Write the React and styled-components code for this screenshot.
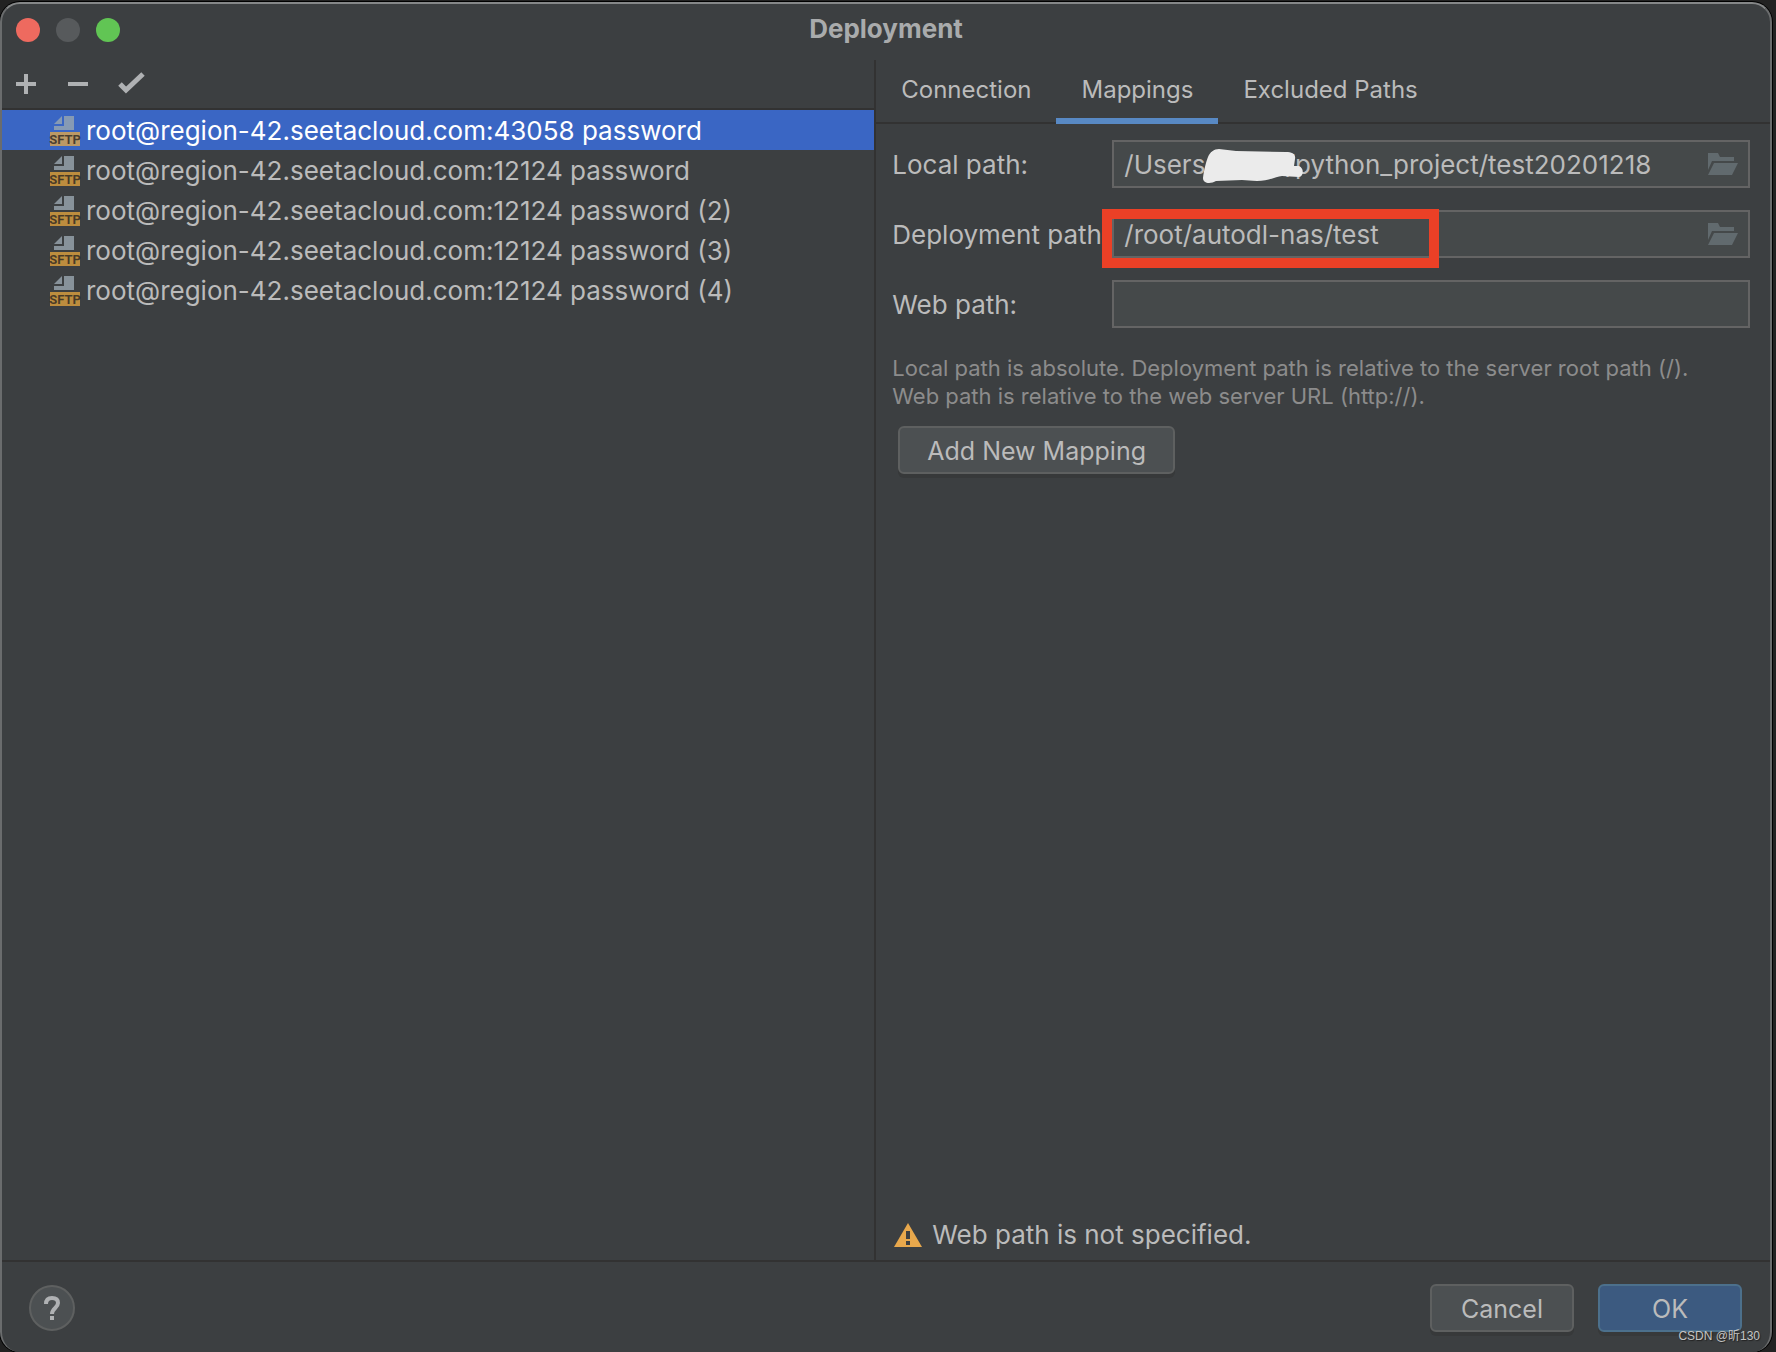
import React, { useState } from "react";
import styled, { createGlobalStyle, css } from "styled-components";

const servers = [
  "root@region-42.seetacloud.com:43058 password",
  "root@region-42.seetacloud.com:12124 password",
  "root@region-42.seetacloud.com:12124 password (2)",
  "root@region-42.seetacloud.com:12124 password (3)",
  "root@region-42.seetacloud.com:12124 password (4)",
];

const tabs = ["Connection", "Mappings", "Excluded Paths"];

const SftpIcon = () => (
  <svg width="30" height="30" viewBox="0 0 30 30" aria-hidden="true">
    <path d="M12 0v8H4z M14 0h10v14H4v-4h10z" fill="#9AA7B0" fillOpacity="0.8" />
    <path d="M0 16h30v14H0z" fill="#F4AF3D" fillOpacity="0.7" />
    <text
      x="15"
      y="28"
      textAnchor="middle"
      fontFamily="Roboto, sans-serif"
      fontSize="13"
      fontWeight="700"
      fill="#231F20"
      fillOpacity="0.75"
    >
      SFTP
    </text>
  </svg>
);

const FolderIcon = () => (
  <svg width="30" height="22" viewBox="0 0 30 22" aria-hidden="true">
    <path d="M0 0h10l2 4h14v4H4L0 17z" fill="#616a6e" />
    <path d="M6 10h24l-6 12H0z" fill="#616a6e" />
  </svg>
);

const WarningIcon = () => (
  <svg width="28" height="24" viewBox="0 0 28 24" aria-hidden="true">
    <path d="M14 0l14 24H0z" fill="#E8A84C" />
    <path d="M12 8h4v8h-4z M12 18h4v4h-4z" fill="#3c3f41" />
  </svg>
);

const Scribble = () => (
  <svg width="102" height="34" viewBox="0 0 102 34" aria-hidden="true">
    <path
      d="M1 29C2 21 4 13 6 8C8 3 12 0 17 0L34 2L84 3C90 3 94 5 93 10L92 17L97 17C102 19 102 27 97 28L80 27C73 28 66 32 55 32C49 32 45 31 40 31L14 32C9 35 1 35 1 29z"
      fill="#ebebeb"
    />
  </svg>
);

export default function App() {
  const [selected, setSelected] = useState(0);
  const [tab, setTab] = useState("Mappings");
  const [localPath, setLocalPath] = useState("/Users/xxxxx/python_project/test20201218");
  const [deployPath, setDeployPath] = useState("/root/autodl-nas/test");
  const [webPath, setWebPath] = useState("");

  return (
    <React.Fragment>
      <GlobalStyle />
      <Window>
        <TitleBar>
          <Lights>
            <Light $color="#ee6a5f" aria-label="Close" />
            <Light $color="#575a5c" aria-label="Minimize" />
            <Light $color="#61c554" aria-label="Zoom" />
          </Lights>
          <Title>Deployment</Title>
        </TitleBar>
        <Body>
          <Sidebar>
            <Toolbar>
              <ToolButton aria-label="Add">
                <svg width="20" height="20" viewBox="0 0 20 20">
                  <path d="M8 0h4v8h8v4h-8v8H8v-8H0V8h8z" fill="#afb1b3" />
                </svg>
              </ToolButton>
              <ToolButton aria-label="Remove">
                <svg width="20" height="20" viewBox="0 0 20 20">
                  <path d="M0 8h20v4H0z" fill="#afb1b3" />
                </svg>
              </ToolButton>
              <ToolButton aria-label="Use as default">
                <svg width="26" height="22" viewBox="0 0 26 22">
                  <path d="M0 11l6 6L23 1" fill="none" stroke="#afb1b3" strokeWidth="5" />
                </svg>
              </ToolButton>
            </Toolbar>
            <ServerList>
              {servers.map((name, index) => (
                <li key={name}>
                  <Server $active={index === selected} onClick={() => setSelected(index)}>
                    <SftpIcon />
                    <span>{name}</span>
                  </Server>
                </li>
              ))}
            </ServerList>
          </Sidebar>
          <Content>
            <Tabs>
              {tabs.map((name) => (
                <Tab key={name} $active={name === tab} onClick={() => setTab(name)}>
                  {name}
                </Tab>
              ))}
            </Tabs>
            <Panel>
              <Fields>
                <Label htmlFor="local">Local path:</Label>
                <Field>
                  <Input id="local" value={localPath} onChange={({ target }) => setLocalPath(target.value)} />
                  <Browse aria-label="Browse local path"><FolderIcon /></Browse>
                  <Redaction><Scribble /></Redaction>
                </Field>
                <Label htmlFor="deploy">Deployment path:</Label>
                <Field>
                  <Input id="deploy" value={deployPath} onChange={({ target }) => setDeployPath(target.value)} />
                  <Browse aria-label="Browse deployment path"><FolderIcon /></Browse>
                  <Highlight />
                </Field>
                <Label htmlFor="web">Web path:</Label>
                <Field>
                  <Input id="web" value={webPath} onChange={({ target }) => setWebPath(target.value)} />
                </Field>
              </Fields>
              <Hint>
                Local path is absolute. Deployment path is relative to the server root path (/).
                <br />
                Web path is relative to the web server URL (http://).
              </Hint>
              <AddButton>Add New Mapping</AddButton>
              <Warning>
                <WarningIcon />
                <span>Web path is not specified.</span>
              </Warning>
            </Panel>
          </Content>
        </Body>
        <Footer>
          <HelpButton aria-label="Help">
            <svg width="16" height="24" viewBox="0 0 16 24">
              <path d="M2 8C2 4 4 2 8 2s6 2 6 5c0 5-6 5-6 11" fill="none" stroke="#afb1b3" strokeWidth="4" />
              <path d="M6 20h4v4H6z" fill="#afb1b3" />
            </svg>
          </HelpButton>
          <Button>Cancel</Button>
          <Button $primary>OK</Button>
        </Footer>
        <Watermark>CSDN @昕130</Watermark>
      </Window>
    </React.Fragment>
  );
}

const GlobalStyle = createGlobalStyle`
  * {
    box-sizing: border-box;
  }

  body {
    margin: 0;
    background: #222;
    color: #bbb;
    font: 26px/32px Inter, "Noto Sans CJK SC", sans-serif;
  }

  button, input {
    margin: 0;
    padding: 0;
    border: 0;
    background: none;
    color: inherit;
    font: inherit;
  }

  svg {
    display: block;
    flex: none;
    overflow: visible;
  }
`;

const Window = styled.div`
  position: relative;
  display: flex;
  flex-direction: column;
  min-height: calc(100vh - 2px);
  margin: 2px 4px 0 0;
  border: 2px solid #6a6c6d;
  border-top-color: #858788;
  border-bottom: 0;
  border-radius: 20px;
  background: #3c3f41;
  box-shadow: 0 0 0 1px #000;
`;

const TitleBar = styled.header`
  display: flex;
  align-items: center;
  height: 56px;
  padding: 0 14px 4px;

  &::after {
    content: "";
    flex: 1;
  }
`;

const Lights = styled.div`
  display: flex;
  flex: 1;
  gap: 16px;
`;

const Light = styled.button`
  width: 24px;
  height: 24px;
  border-radius: 50%;
  background: ${({ $color }) => $color};
`;

const Title = styled.h1`
  margin: 0;
  padding-bottom: 2px;
  color: #a9abac;
  font-size: 26px;
  font-weight: 700;
`;

const Body = styled.div`
  display: flex;
  flex: 1;
`;

const Sidebar = styled.aside`
  flex: none;
  width: 49.45%;
  border-right: 2px solid #323232;
`;

const Toolbar = styled.div`
  display: flex;
  align-items: center;
  gap: 32px;
  height: 50px;
  padding: 0 14px;
  border-bottom: 2px solid #323232;
`;

const ToolButton = styled.button`
  display: flex;
`;

const ServerList = styled.ul`
  margin: 0;
  padding: 0;
  list-style: none;
`;

const Server = styled.button`
  display: flex;
  align-items: center;
  gap: 6px;
  width: 100%;
  height: 40px;
  padding: 2px 0 0 48px;
  text-align: left;
  white-space: nowrap;

  ${({ $active }) => $active && css`
    background: #3a66c4;
    color: #fff;
  `}
`;

const Content = styled.main`
  display: flex;
  flex: 1;
  flex-direction: column;
  min-width: 0;
`;

const Tabs = styled.nav`
  display: flex;
  height: 64px;
  border-bottom: 2px solid #323232;
`;

const Tab = styled.button`
  height: 64px;
  padding: 2px 25px 0;
  border-bottom: 6px solid ${({ $active }) => ($active ? "#5889c4" : "transparent")};
  font-size: 24px;
`;

const Panel = styled.div`
  display: flex;
  flex: 1;
  flex-direction: column;
  align-items: flex-start;
  padding: 16px 20px 9px 16px;
`;

const Fields = styled.div`
  display: grid;
  grid-template-columns: 220px 1fr;
  align-items: center;
  row-gap: 22px;
  width: 100%;
`;

const Label = styled.label`
  padding-top: 2px;
  white-space: nowrap;
`;

const Field = styled.div`
  position: relative;
  display: flex;
  align-items: center;
  height: 48px;
  padding: 0 10px;
  border: 2px solid #646464;
  background: #45494a;
`;

const Input = styled.input`
  flex: 1;
  min-width: 0;
  padding-top: 2px;
  outline: none;
`;

const Browse = styled.button`
  display: flex;
`;

/* pen marks drawn over the form */
const Redaction = styled.div`
  position: absolute;
  top: 7px;
  left: 88px;
`;

const Highlight = styled.div`
  position: absolute;
  top: -3px;
  left: -12px;
  width: 337px;
  height: 59px;
  border: 10px solid #eb4026;
  pointer-events: none;
`;

const Hint = styled.p`
  margin: 26px 0 16px;
  color: #8c8c8c;
  font-size: 22px;
  line-height: 28px;
`;

const Button = styled.button`
  min-width: 144px;
  height: 48px;
  padding: 2px 27px 0;
  border: 2px solid ${({ $primary }) => ($primary ? "#4c708c" : "#5e6060")};
  border-radius: 6px;
  background: ${({ $primary }) => ($primary ? "#3c5a80" : "#4c5052")};
  box-shadow: 0 4px 0 #37393a;
  font-size: 25px;
`;

const AddButton = styled(Button)`
  margin-left: 6px;
`;

const Warning = styled.div`
  display: flex;
  align-items: center;
  gap: 10px;
  margin-top: auto;
  padding-left: 2px;
`;

const Footer = styled.footer`
  display: flex;
  align-items: center;
  gap: 24px;
  height: 92px;
  padding: 2px 28px 0 27px;
  border-top: 2px solid #323232;
`;

const HelpButton = styled.button`
  display: flex;
  align-items: center;
  justify-content: center;
  width: 46px;
  height: 46px;
  margin-right: auto;
  border: 2px solid #5e6060;
  border-radius: 50%;
  background: #4c5052;
`;

const Watermark = styled.div`
  position: absolute;
  right: 10px;
  bottom: 8px;
  color: #c4c4c4;
  font: 12px/16px "Liberation Sans", "Noto Sans CJK SC", sans-serif;
  text-shadow: 1px 1px 1px #222;
`;
